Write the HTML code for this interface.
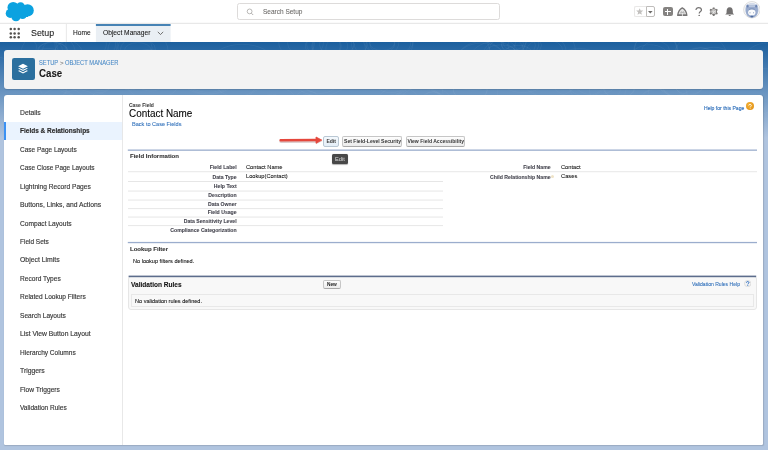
<!DOCTYPE html>
<html><head><meta charset="utf-8"><style>
*{box-sizing:border-box}
html,body{margin:0;padding:0;width:768px;height:450px;overflow:hidden;background:#fff;font-family:"Liberation Sans",sans-serif}
#root{position:relative;width:768px;height:450px;overflow:hidden;will-change:transform}
.t{position:absolute;white-space:nowrap;line-height:1}
.abs{position:absolute}
.btn{position:absolute;border:1px solid #c6c6c6;border-bottom-color:#a9a9a9;border-radius:2px;background:linear-gradient(#fdfdfd,#ececec)}
</style></head><body><div id="root">
<div class="abs" style="left:0;top:0;width:768px;height:23px;background:#fff"></div>
<svg class="abs" style="left:0;top:0" width="40" height="23" viewBox="0 0 40 23"><g fill="#0ba2e0">
<circle cx="13.2" cy="7.6" r="5.7"/><circle cx="20.6" cy="6.9" r="4.6"/><circle cx="27.6" cy="10.4" r="6.2"/>
<circle cx="10.2" cy="13.4" r="4.5"/><circle cx="16" cy="16.6" r="4.7"/><circle cx="22.6" cy="14.6" r="4.4"/>
<rect x="10" y="8" width="18" height="9"/></g></svg>
<div class="abs" style="left:236.5px;top:3.4px;width:263.5px;height:16.2px;border:1px solid #dddbda;border-radius:2.5px;background:#fff"></div>
<svg class="abs" style="left:246px;top:8px" width="8" height="8" viewBox="0 0 8 8"><circle cx="3.6" cy="3.4" r="2.4" fill="none" stroke="#a3a19f" stroke-width="0.75"/><path d="M5.4 5.2 L7.2 7.0" stroke="#a3a19f" stroke-width="0.85"/></svg>
<div class="t" style="left:263.00px;top:8.05px;font-size:7.0px;font-weight:normal;color:#6b6967;transform:scaleX(0.9289);transform-origin:left top;-webkit-text-stroke:0.08px currentColor;">Search Setup</div>
<div class="abs" style="left:634.4px;top:5.5px;width:12px;height:11.8px;border:1px solid #e9e8e7;border-right:0;border-radius:2px 0 0 2px"></div>
<div class="abs" style="left:646px;top:5.5px;width:9px;height:11.8px;border:1px solid #bfbdbb;border-radius:0 2px 2px 0"></div>
<svg class="abs" style="left:636.4px;top:8.4px" width="7.4" height="7" viewBox="0 0 10 9.5"><path d="M5 0.2 L6.3 3.3 L9.8 3.5 L7.1 5.7 L8 9.2 L5 7.3 L2 9.2 L2.9 5.7 L0.2 3.5 L3.7 3.3Z" fill="#c2c0be"/></svg>
<svg class="abs" style="left:648.3px;top:10.6px" width="4.6" height="3" viewBox="0 0 4.6 3"><path d="M0 0 H4.6 L2.3 2.6Z" fill="#6b6967"/></svg>
<div class="abs" style="left:663px;top:6.8px;width:9.8px;height:9.6px;background:#858381;border-radius:2px"></div>
<div class="abs" style="left:665.0px;top:11.1px;width:5.8px;height:1.1px;background:#fff"></div>
<div class="abs" style="left:667.35px;top:8.75px;width:1.1px;height:5.8px;background:#fff"></div>
<svg class="abs" style="left:677.2px;top:6.5px" width="10.6" height="9.6" viewBox="0 0 10.6 9.6">
<path d="M5.3 0.9 A8.9 8.9 0 0 1 9.75 8.6 A8.9 8.9 0 0 1 0.85 8.6 A8.9 8.9 0 0 1 5.3 0.9Z" fill="#e8e8e8" stroke="#767474" stroke-width="1.25" stroke-linejoin="round"/>
<path d="M2.6 6.6 L4.3 4.0 L5.4 5.1 L6.5 3.9 L8.1 6.6Z" fill="#b8b8b8"/>
<path d="M0.4 7.2 L10.2 7.2 L10.1 9.2 L0.5 9.2Z" fill="#767474"/><rect x="4.95" y="6.2" width="0.7" height="3.2" fill="#fff"/></svg>
<svg class="abs" style="left:694.6px;top:6.8px" width="7.6" height="9.6" viewBox="0 0 7.6 9.6"><path d="M1 2.9 C1 1.4 2.2 0.7 3.7 0.7 C5.3 0.7 6.5 1.6 6.5 2.9 C6.5 4.4 4.2 4.6 4.2 6.4" stroke="#767474" stroke-width="1.25" fill="none"/><circle cx="4.2" cy="8.6" r="0.8" fill="#767474"/></svg>
<svg class="abs" style="left:709.4px;top:7.4px" width="9.4" height="9.4" viewBox="0 0 10 10"><path d="M6.77 1.93 L5.92 1.57 L5.98 0.40 L4.02 0.40 L4.08 1.57 L3.22 1.93 L2.49 2.49 L1.51 1.86 L0.53 3.55 L1.57 4.08 L1.45 5.00 L1.57 5.92 L0.53 6.45 L1.51 8.14 L2.49 7.51 L3.22 8.07 L4.08 8.43 L4.02 9.60 L5.98 9.60 L5.92 8.43 L6.77 8.07 L7.51 7.51 L8.49 8.14 L9.47 6.45 L8.43 5.92 L8.55 5.00 L8.43 4.08 L9.47 3.55 L8.49 1.86 L7.51 2.49Z" fill="#7a7876"/>
<circle cx="5" cy="5" r="2.55" fill="#fafafa"/><circle cx="5" cy="5" r="1.7" fill="none" stroke="#7a7876" stroke-width="0.55"/><path d="M5 3.9 L5 5.1 L5.8 5.5" stroke="#8a8886" stroke-width="0.4" fill="none"/></svg>
<svg class="abs" style="left:725px;top:6.9px" width="9.4" height="9.2" viewBox="0 0 10 9.8"><path d="M5 0.2 C7.5 0.2 8.3 2.3 8.3 4.4 L8.4 6.6 L9.8 8 L0.2 8 L1.6 6.6 L1.7 4.4 C1.7 2.3 2.5 0.2 5 0.2Z" fill="#727070"/><path d="M3.8 8.4 A1.2 1.2 0 0 0 6.2 8.4Z" fill="#727070"/></svg>
<svg class="abs" style="left:742.5px;top:1px" width="17.8" height="17.6" viewBox="0 0 17.8 17.6">
<circle cx="8.9" cy="8.75" r="8.2" fill="#fdfdfd" stroke="#cdcdcd" stroke-width="0.7"/>
<circle cx="8.9" cy="8.75" r="7.1" fill="#d3dbe9"/>
<path d="M3.4 5.6 C3.2 4.2 3.6 3.4 4.6 3.6 L6 4.2 L11.8 4.2 L13.2 3.6 C14.2 3.4 14.6 4.2 14.4 5.6 C15.4 8 15.2 13 13.2 15 C11.6 16.2 10.2 16.6 8.9 16.6 C7.6 16.6 6.2 16.2 4.6 15 C2.6 13 2.4 8 3.4 5.6Z" fill="#99abcd"/>
<path d="M6 4.2 L11.8 4.2 L12.4 6 L5.4 6Z" fill="#b9c6de"/>
<ellipse cx="4.6" cy="5.2" rx="0.9" ry="1.2" fill="#6a82b0"/><ellipse cx="13.2" cy="5.2" rx="0.9" ry="1.2" fill="#6a82b0"/>
<ellipse cx="8.9" cy="8.4" rx="3" ry="1.2" fill="#7d93bb"/>
<ellipse cx="8.8" cy="11.4" rx="3.7" ry="2.9" fill="#fbfcfd"/>
<circle cx="7" cy="11.7" r="0.55" fill="#7d90b4"/><circle cx="10.6" cy="11.7" r="0.55" fill="#7d90b4"/>
<ellipse cx="8.9" cy="15.6" rx="1.6" ry="0.9" fill="#4f6b9e"/></svg>
<svg class="abs" style="left:0px;top:22px" width="769" height="3"><rect x="0.00" y="0.80" width="768.00" height="1.10" fill="#e6e6e6" fill-opacity="1"/></svg>
<svg class="abs" style="left:8px;top:26px" width="14" height="14" viewBox="0 0 14 14"><g fill="#53514f"><circle cx="2.8" cy="3.1" r="1.25"/><circle cx="6.6" cy="3.1" r="1.25"/><circle cx="10.7" cy="3.1" r="1.25"/><circle cx="2.8" cy="7.5" r="1.25"/><circle cx="6.6" cy="7.5" r="1.25"/><circle cx="10.7" cy="7.5" r="1.25"/><circle cx="2.8" cy="11.3" r="1.25"/><circle cx="6.6" cy="11.3" r="1.25"/><circle cx="10.7" cy="11.3" r="1.25"/></g></svg>
<div class="t" style="left:31.40px;top:28.31px;font-size:9.4px;font-weight:normal;color:#181818;transform:scaleX(0.9444);transform-origin:left top;-webkit-text-stroke:0.08px currentColor;">Setup</div>
<svg class="abs" style="left:65px;top:24px" width="3" height="19"><rect x="0.90" y="0.00" width="0.80" height="18.00" fill="#e3e3e3" fill-opacity="1"/></svg>
<div class="t" style="left:72.50px;top:29.45px;font-size:7.0px;font-weight:normal;color:#181818;transform:scaleX(0.9426);transform-origin:left top;-webkit-text-stroke:0.08px currentColor;">Home</div>
<svg class="abs" style="left:95px;top:24px" width="77" height="19"><rect x="0.90" y="0.00" width="74.70" height="18.00" fill="#eaeff4" fill-opacity="1"/></svg>
<svg class="abs" style="left:95px;top:24px" width="77" height="3"><rect x="0.90" y="0.10" width="74.70" height="1.80" fill="#3677ae" fill-opacity="1"/></svg>
<div class="t" style="left:102.70px;top:29.45px;font-size:7.0px;font-weight:normal;color:#181818;transform:scaleX(0.9517);transform-origin:left top;-webkit-text-stroke:0.08px currentColor;">Object Manager</div>
<svg class="abs" style="left:156.6px;top:31.1px" width="7" height="5" viewBox="0 0 7 5"><path d="M0.8 0.9 L3.5 3.5 L6.2 0.9" stroke="#514f4d" stroke-width="0.8" fill="none"/></svg>
<div class="abs" style="left:0;top:42px;width:768px;height:408px;background:#b0c4df"></div>
<div class="abs" style="left:0;top:42px;width:768px;height:96px;background:linear-gradient(#1b5f9e,rgba(176,196,223,0))"></div>
<svg class="abs" style="left:0;top:42px" width="768" height="130" viewBox="0 0 768 130"><defs><linearGradient id="fadeg" x1="0" y1="0" x2="0" y2="1"><stop offset="0" stop-color="#fff" stop-opacity="1"/><stop offset="1" stop-color="#fff" stop-opacity="0"/></linearGradient><mask id="fadem"><rect width="768" height="130" fill="url(#fadeg)"/></mask></defs><g mask="url(#fadem)" fill="none" stroke="#ffffff" stroke-opacity="0.09" stroke-width="0.6"><ellipse cx="242.3" cy="21.1" rx="7.1" ry="5.9"/><ellipse cx="242.3" cy="21.1" rx="11.1" ry="8.1"/><ellipse cx="242.3" cy="21.1" rx="32.0" ry="18.8"/><ellipse cx="49.6" cy="58.5" rx="8.0" ry="5.4"/><ellipse cx="649.8" cy="17.3" rx="19.9" ry="14.6"/><ellipse cx="30.1" cy="82.0" rx="27.5" ry="14.3"/><ellipse cx="675.4" cy="40.5" rx="17.9" ry="13.0"/><ellipse cx="433.8" cy="95.5" rx="18.8" ry="14.2"/><ellipse cx="281.6" cy="76.7" rx="18.4" ry="13.8"/><ellipse cx="382.1" cy="74.4" rx="16.2" ry="14.1"/><ellipse cx="382.1" cy="74.4" rx="17.0" ry="10.2"/><ellipse cx="125.6" cy="109.2" rx="18.6" ry="13.2"/><ellipse cx="688.9" cy="102.1" rx="19.4" ry="10.3"/><ellipse cx="688.9" cy="102.1" rx="20.3" ry="11.5"/><ellipse cx="257.1" cy="130.7" rx="6.9" ry="5.3"/><ellipse cx="257.1" cy="130.7" rx="25.8" ry="18.8"/><ellipse cx="689.1" cy="43.9" rx="13.7" ry="9.6"/><ellipse cx="689.1" cy="43.9" rx="26.5" ry="14.0"/><ellipse cx="689.1" cy="43.9" rx="14.1" ry="8.5"/><ellipse cx="544.6" cy="9.1" rx="21.4" ry="16.3"/><ellipse cx="544.6" cy="9.1" rx="30.8" ry="25.6"/><ellipse cx="544.6" cy="9.1" rx="18.3" ry="11.9"/><ellipse cx="521.6" cy="3.2" rx="13.8" ry="10.3"/><ellipse cx="521.6" cy="3.2" rx="19.9" ry="11.7"/><ellipse cx="212.8" cy="103.4" rx="14.6" ry="12.4"/><ellipse cx="212.8" cy="103.4" rx="10.8" ry="7.3"/><ellipse cx="425.0" cy="123.7" rx="25.0" ry="15.3"/><ellipse cx="425.0" cy="123.7" rx="18.1" ry="11.7"/><ellipse cx="696.2" cy="134.1" rx="7.8" ry="4.4"/><ellipse cx="513.4" cy="1.7" rx="10.0" ry="6.1"/><ellipse cx="513.4" cy="1.7" rx="12.2" ry="8.7"/><ellipse cx="513.4" cy="1.7" rx="25.4" ry="15.9"/><ellipse cx="81.6" cy="120.3" rx="20.4" ry="16.2"/><ellipse cx="81.6" cy="120.3" rx="19.0" ry="16.2"/><ellipse cx="81.6" cy="120.3" rx="32.9" ry="25.4"/><ellipse cx="433.0" cy="55.7" rx="8.3" ry="6.2"/><ellipse cx="433.0" cy="55.7" rx="10.4" ry="5.5"/><ellipse cx="149.1" cy="22.7" rx="19.2" ry="10.4"/><ellipse cx="149.1" cy="22.7" rx="21.5" ry="15.3"/><ellipse cx="748.6" cy="85.9" rx="25.2" ry="18.8"/><ellipse cx="100.3" cy="35.3" rx="19.3" ry="13.3"/><ellipse cx="100.3" cy="35.3" rx="11.5" ry="8.0"/><ellipse cx="772.0" cy="67.3" rx="7.9" ry="4.3"/><ellipse cx="772.0" cy="67.3" rx="16.5" ry="10.0"/><ellipse cx="651.4" cy="22.6" rx="10.5" ry="9.3"/><ellipse cx="273.0" cy="96.6" rx="22.7" ry="14.0"/><ellipse cx="500.8" cy="12.7" rx="17.4" ry="15.0"/><ellipse cx="500.8" cy="12.7" rx="16.8" ry="9.9"/><ellipse cx="418.7" cy="70.4" rx="10.9" ry="9.0"/><ellipse cx="418.7" cy="70.4" rx="30.7" ry="25.8"/><ellipse cx="418.7" cy="70.4" rx="29.7" ry="24.6"/><ellipse cx="579.3" cy="31.7" rx="16.8" ry="13.3"/><ellipse cx="579.3" cy="31.7" rx="30.8" ry="25.1"/><ellipse cx="579.3" cy="31.7" rx="22.4" ry="12.9"/><ellipse cx="470.2" cy="48.2" rx="27.7" ry="24.5"/><ellipse cx="470.2" cy="48.2" rx="17.0" ry="10.0"/><ellipse cx="470.2" cy="48.2" rx="17.0" ry="9.8"/><ellipse cx="145.5" cy="87.4" rx="24.5" ry="16.9"/><ellipse cx="145.5" cy="87.4" rx="23.4" ry="19.2"/><ellipse cx="145.5" cy="87.4" rx="13.9" ry="10.6"/><ellipse cx="716.9" cy="109.5" rx="16.5" ry="9.4"/><ellipse cx="619.2" cy="46.6" rx="14.7" ry="9.7"/><ellipse cx="619.2" cy="46.6" rx="29.8" ry="23.6"/><ellipse cx="619.2" cy="46.6" rx="15.7" ry="8.7"/><ellipse cx="102.4" cy="126.7" rx="9.2" ry="7.7"/><ellipse cx="102.4" cy="126.7" rx="30.6" ry="23.3"/><ellipse cx="102.4" cy="126.7" rx="19.7" ry="14.2"/><ellipse cx="86.1" cy="2.0" rx="20.3" ry="14.4"/><ellipse cx="86.1" cy="2.0" rx="29.5" ry="19.9"/><ellipse cx="86.1" cy="2.0" rx="31.2" ry="25.9"/><ellipse cx="150.9" cy="35.3" rx="17.0" ry="13.7"/><ellipse cx="150.9" cy="35.3" rx="16.2" ry="11.6"/><ellipse cx="655.7" cy="8.5" rx="13.8" ry="9.4"/><ellipse cx="655.7" cy="8.5" rx="21.8" ry="18.8"/><ellipse cx="655.7" cy="8.5" rx="21.3" ry="18.4"/><ellipse cx="386.3" cy="74.5" rx="17.2" ry="14.6"/><ellipse cx="386.3" cy="74.5" rx="26.1" ry="19.4"/><ellipse cx="386.3" cy="74.5" rx="29.1" ry="16.3"/><ellipse cx="94.7" cy="86.7" rx="18.2" ry="11.5"/><ellipse cx="399.9" cy="77.8" rx="25.4" ry="13.3"/><ellipse cx="135.0" cy="5.9" rx="17.2" ry="12.4"/><ellipse cx="595.6" cy="127.7" rx="13.2" ry="11.7"/><ellipse cx="595.6" cy="127.7" rx="22.3" ry="12.9"/><ellipse cx="204.5" cy="71.1" rx="17.2" ry="10.3"/><ellipse cx="204.5" cy="71.1" rx="20.5" ry="17.4"/><ellipse cx="731.5" cy="129.2" rx="24.5" ry="13.6"/><ellipse cx="78.5" cy="61.9" rx="20.8" ry="13.9"/><ellipse cx="152.3" cy="42.4" rx="25.7" ry="14.5"/><ellipse cx="560.1" cy="92.4" rx="11.6" ry="6.4"/><ellipse cx="358.9" cy="104.5" rx="14.8" ry="10.3"/><ellipse cx="781.8" cy="116.5" rx="21.5" ry="19.3"/><ellipse cx="307.1" cy="59.0" rx="13.0" ry="10.3"/><ellipse cx="307.1" cy="59.0" rx="9.4" ry="6.8"/><ellipse cx="336.8" cy="2.5" rx="17.4" ry="10.7"/><ellipse cx="336.8" cy="2.5" rx="30.1" ry="16.4"/><ellipse cx="724.0" cy="32.0" rx="7.8" ry="4.8"/><ellipse cx="713.8" cy="25.4" rx="24.0" ry="20.2"/><ellipse cx="527.5" cy="132.4" rx="9.3" ry="8.1"/><ellipse cx="527.5" cy="132.4" rx="21.6" ry="16.8"/><ellipse cx="52.5" cy="8.1" rx="10.0" ry="8.6"/><ellipse cx="52.5" cy="8.1" rx="14.9" ry="7.6"/><ellipse cx="52.5" cy="8.1" rx="13.9" ry="8.4"/><ellipse cx="472.6" cy="31.1" rx="25.0" ry="17.0"/><ellipse cx="472.6" cy="31.1" rx="16.5" ry="11.9"/><ellipse cx="730.6" cy="37.5" rx="7.0" ry="5.4"/><ellipse cx="739.9" cy="135.7" rx="7.1" ry="4.1"/><ellipse cx="739.9" cy="135.7" rx="15.9" ry="9.9"/><ellipse cx="595.2" cy="40.6" rx="20.8" ry="12.6"/><ellipse cx="595.2" cy="40.6" rx="26.7" ry="24.0"/><ellipse cx="595.2" cy="40.6" rx="12.8" ry="6.5"/><ellipse cx="389.6" cy="136.9" rx="16.4" ry="14.4"/><ellipse cx="389.6" cy="136.9" rx="11.3" ry="9.4"/><ellipse cx="389.6" cy="136.9" rx="21.5" ry="15.0"/><ellipse cx="656.0" cy="55.0" rx="12.8" ry="7.5"/><ellipse cx="656.0" cy="55.0" rx="14.1" ry="8.1"/><ellipse cx="656.0" cy="55.0" rx="31.4" ry="24.9"/><ellipse cx="93.2" cy="138.5" rx="24.4" ry="12.3"/><ellipse cx="486.6" cy="123.2" rx="9.6" ry="5.1"/><ellipse cx="486.6" cy="123.2" rx="27.5" ry="23.3"/><ellipse cx="523.1" cy="39.5" rx="21.2" ry="11.0"/><ellipse cx="130.1" cy="37.7" rx="11.8" ry="10.4"/><ellipse cx="767.8" cy="76.6" rx="6.8" ry="5.8"/><ellipse cx="156.5" cy="25.6" rx="14.4" ry="9.9"/><ellipse cx="156.5" cy="25.6" rx="20.1" ry="11.6"/><ellipse cx="388.8" cy="0.7" rx="24.0" ry="13.4"/><ellipse cx="388.8" cy="0.7" rx="21.9" ry="14.4"/><ellipse cx="222.7" cy="88.2" rx="18.9" ry="13.4"/><ellipse cx="587.9" cy="92.1" rx="23.2" ry="17.2"/><ellipse cx="587.9" cy="92.1" rx="25.8" ry="20.3"/><ellipse cx="587.9" cy="92.1" rx="22.9" ry="14.0"/><ellipse cx="481.2" cy="20.3" rx="25.6" ry="19.2"/><ellipse cx="481.2" cy="20.3" rx="25.1" ry="20.7"/><ellipse cx="481.2" cy="20.3" rx="15.1" ry="10.7"/><ellipse cx="388.5" cy="116.9" rx="24.2" ry="17.7"/><ellipse cx="703.2" cy="95.6" rx="20.1" ry="10.8"/><ellipse cx="703.2" cy="95.6" rx="9.9" ry="7.5"/><ellipse cx="703.2" cy="95.6" rx="33.1" ry="21.5"/><ellipse cx="345.6" cy="7.1" rx="19.8" ry="15.3"/><ellipse cx="376.3" cy="0.5" rx="22.5" ry="15.7"/><ellipse cx="413.5" cy="92.3" rx="22.4" ry="15.4"/><ellipse cx="635.5" cy="118.5" rx="22.0" ry="12.8"/><ellipse cx="579.3" cy="136.6" rx="24.6" ry="13.1"/><ellipse cx="579.3" cy="136.6" rx="29.0" ry="17.9"/><ellipse cx="17.9" cy="88.6" rx="7.7" ry="4.3"/><ellipse cx="185.7" cy="104.1" rx="19.7" ry="10.9"/><ellipse cx="185.7" cy="104.1" rx="19.6" ry="13.6"/><ellipse cx="767.7" cy="13.9" rx="20.9" ry="12.9"/><ellipse cx="398.4" cy="65.1" rx="22.9" ry="20.5"/><ellipse cx="398.4" cy="65.1" rx="21.1" ry="13.2"/><ellipse cx="49.5" cy="66.2" rx="16.1" ry="13.3"/><ellipse cx="49.5" cy="66.2" rx="30.3" ry="20.6"/><ellipse cx="197.6" cy="29.4" rx="7.6" ry="4.1"/><ellipse cx="585.5" cy="36.7" rx="8.9" ry="7.4"/><ellipse cx="585.5" cy="36.7" rx="20.2" ry="17.3"/><ellipse cx="549.7" cy="32.4" rx="14.7" ry="8.3"/><ellipse cx="549.7" cy="32.4" rx="29.9" ry="23.1"/><ellipse cx="308.4" cy="101.8" rx="13.6" ry="8.5"/><ellipse cx="308.4" cy="101.8" rx="27.5" ry="13.8"/><ellipse cx="588.1" cy="117.5" rx="26.7" ry="15.4"/><ellipse cx="-10.5" cy="103.6" rx="14.2" ry="9.3"/><ellipse cx="-10.5" cy="103.6" rx="31.0" ry="22.8"/><ellipse cx="272.2" cy="59.9" rx="24.8" ry="15.2"/><ellipse cx="272.2" cy="59.9" rx="10.1" ry="7.8"/><ellipse cx="494.3" cy="20.8" rx="15.6" ry="9.8"/><ellipse cx="494.3" cy="20.8" rx="26.0" ry="21.2"/><ellipse cx="326.5" cy="4.1" rx="14.8" ry="12.6"/><ellipse cx="326.5" cy="4.1" rx="21.2" ry="12.3"/><ellipse cx="326.5" cy="4.1" rx="13.8" ry="12.0"/><ellipse cx="312.8" cy="86.1" rx="20.2" ry="12.4"/><ellipse cx="19.7" cy="129.7" rx="9.8" ry="6.5"/><ellipse cx="208.2" cy="35.8" rx="27.5" ry="16.6"/><ellipse cx="208.2" cy="35.8" rx="23.4" ry="14.5"/><ellipse cx="208.2" cy="35.8" rx="24.3" ry="16.0"/><ellipse cx="115.5" cy="22.6" rx="17.0" ry="14.0"/><ellipse cx="425.8" cy="63.4" rx="27.9" ry="19.0"/><ellipse cx="425.8" cy="63.4" rx="12.1" ry="7.0"/><ellipse cx="53.5" cy="47.9" rx="13.0" ry="8.4"/><ellipse cx="635.6" cy="28.3" rx="22.5" ry="15.0"/><ellipse cx="315.2" cy="73.4" rx="11.9" ry="9.6"/><ellipse cx="315.2" cy="73.4" rx="20.0" ry="14.6"/><ellipse cx="271.7" cy="96.1" rx="19.9" ry="16.8"/><ellipse cx="271.7" cy="96.1" rx="13.8" ry="8.4"/><ellipse cx="271.7" cy="96.1" rx="17.5" ry="11.5"/><ellipse cx="341.1" cy="133.6" rx="8.8" ry="5.9"/><ellipse cx="598.6" cy="112.6" rx="16.8" ry="8.9"/><ellipse cx="598.6" cy="112.6" rx="29.5" ry="25.7"/><ellipse cx="598.6" cy="112.6" rx="23.6" ry="16.2"/><ellipse cx="343.6" cy="109.6" rx="9.4" ry="6.7"/><ellipse cx="532.5" cy="131.8" rx="21.4" ry="18.0"/><ellipse cx="532.5" cy="131.8" rx="28.7" ry="15.3"/><ellipse cx="532.5" cy="131.8" rx="29.1" ry="14.6"/><ellipse cx="81.8" cy="79.7" rx="20.2" ry="12.6"/><ellipse cx="83.7" cy="35.3" rx="15.6" ry="12.6"/><ellipse cx="83.7" cy="35.3" rx="11.2" ry="6.9"/><ellipse cx="83.7" cy="35.3" rx="32.8" ry="18.9"/><ellipse cx="191.3" cy="110.7" rx="6.2" ry="3.9"/><ellipse cx="353.2" cy="134.3" rx="24.5" ry="14.6"/><ellipse cx="353.2" cy="134.3" rx="20.6" ry="14.8"/><ellipse cx="353.2" cy="134.3" rx="12.6" ry="8.4"/><ellipse cx="506.2" cy="7.7" rx="17.0" ry="13.1"/><ellipse cx="320.2" cy="36.0" rx="15.3" ry="9.9"/><ellipse cx="320.2" cy="36.0" rx="19.8" ry="15.4"/><ellipse cx="320.2" cy="36.0" rx="27.8" ry="17.9"/><ellipse cx="301.1" cy="0.9" rx="22.3" ry="15.6"/><ellipse cx="301.1" cy="0.9" rx="13.5" ry="12.0"/><ellipse cx="232.5" cy="114.8" rx="16.2" ry="9.8"/><ellipse cx="700.4" cy="15.3" rx="16.9" ry="9.7"/><ellipse cx="700.4" cy="15.3" rx="13.9" ry="9.3"/><ellipse cx="700.4" cy="15.3" rx="26.6" ry="23.4"/><ellipse cx="98.6" cy="55.1" rx="6.5" ry="4.8"/><ellipse cx="316.5" cy="99.4" rx="14.7" ry="12.6"/><ellipse cx="695.7" cy="102.6" rx="26.5" ry="16.7"/><ellipse cx="130.3" cy="131.0" rx="16.3" ry="10.2"/><ellipse cx="130.3" cy="131.0" rx="25.0" ry="20.9"/><ellipse cx="130.3" cy="131.0" rx="33.7" ry="22.8"/><ellipse cx="68.3" cy="11.0" rx="13.7" ry="12.1"/><ellipse cx="80.2" cy="135.0" rx="14.4" ry="11.6"/><ellipse cx="230.0" cy="112.6" rx="7.1" ry="4.9"/><ellipse cx="281.9" cy="128.7" rx="13.1" ry="10.4"/><ellipse cx="364.4" cy="88.4" rx="23.9" ry="19.2"/><ellipse cx="12.9" cy="4.9" rx="23.7" ry="12.4"/><ellipse cx="137.9" cy="8.8" rx="13.5" ry="8.2"/><ellipse cx="137.9" cy="8.8" rx="30.1" ry="22.5"/><ellipse cx="137.9" cy="8.8" rx="17.8" ry="14.0"/><ellipse cx="236.4" cy="38.6" rx="21.9" ry="16.1"/><ellipse cx="632.6" cy="132.5" rx="6.5" ry="3.9"/><ellipse cx="364.9" cy="133.9" rx="23.4" ry="20.2"/><ellipse cx="364.9" cy="133.9" rx="26.9" ry="14.9"/><ellipse cx="382.2" cy="1.2" rx="12.7" ry="9.8"/><ellipse cx="382.2" cy="1.2" rx="12.3" ry="7.3"/><ellipse cx="382.2" cy="1.2" rx="30.9" ry="21.2"/><ellipse cx="614.9" cy="83.4" rx="10.3" ry="8.3"/><ellipse cx="614.9" cy="83.4" rx="14.4" ry="7.6"/><ellipse cx="614.9" cy="83.4" rx="12.7" ry="9.2"/><ellipse cx="243.9" cy="137.2" rx="27.7" ry="16.8"/><ellipse cx="48.1" cy="13.5" rx="27.7" ry="24.7"/><ellipse cx="48.1" cy="13.5" rx="12.8" ry="7.1"/><ellipse cx="353.3" cy="124.8" rx="22.5" ry="18.8"/><ellipse cx="518.2" cy="17.0" rx="12.5" ry="9.1"/><ellipse cx="518.2" cy="17.0" rx="17.2" ry="13.7"/><ellipse cx="141.3" cy="34.6" rx="11.2" ry="6.8"/><ellipse cx="715.1" cy="26.4" rx="14.7" ry="13.2"/><ellipse cx="390.9" cy="32.4" rx="20.4" ry="18.3"/><ellipse cx="62.9" cy="66.5" rx="24.5" ry="21.2"/><ellipse cx="12.7" cy="41.1" rx="7.1" ry="5.3"/><ellipse cx="650.6" cy="27.2" rx="14.2" ry="12.0"/></g></svg>
<div class="abs" style="left:4px;top:49.5px;width:759px;height:39px;background:#f3f3f3;border-radius:3px;box-shadow:0 1px 1px rgba(0,0,0,.12)"></div>
<div class="abs" style="left:12px;top:57.7px;width:22.8px;height:22.8px;background:#2b6f9e;border-radius:2.2px"></div>
<svg class="abs" style="left:16.4px;top:62.2px" width="14" height="14" viewBox="0 0 13 13"><g fill="#fff"><path d="M6.5 1.6 L11 3.9 L6.5 6.2 L2 3.9Z"/><path d="M2.9 5.5 L6.5 7.3 L10.1 5.5 L11 6.1 L6.5 8.4 L2 6.1Z"/><path d="M2.9 7.7 L6.5 9.5 L10.1 7.7 L11 8.3 L6.5 10.6 L2 8.3Z"/></g></svg>
<div class="t" style="left:38.80px;top:59.79px;font-size:6.6px;font-weight:normal;color:#4a8ac6;transform:scaleX(0.8725);transform-origin:left top;-webkit-text-stroke:0.08px currentColor;">SETUP</div>
<div class="t" style="left:59.60px;top:60.13px;font-size:6.2px;font-weight:normal;color:#777;transform:scaleX(0.9941);transform-origin:left top;-webkit-text-stroke:0.08px currentColor;">&gt;</div>
<div class="t" style="left:64.90px;top:59.79px;font-size:6.6px;font-weight:normal;color:#4a8ac6;transform:scaleX(0.8769);transform-origin:left top;-webkit-text-stroke:0.08px currentColor;">OBJECT MANAGER</div>
<div class="t" style="left:38.90px;top:69.16px;font-size:10.4px;font-weight:bold;color:#181818;transform:scaleX(0.9331);transform-origin:left top;-webkit-text-stroke:0.08px currentColor;">Case</div>
<div class="abs" style="left:4px;top:95px;width:758.8px;height:350px;background:#fff;border-radius:3px 3px 1.5px 1.5px;box-shadow:0.5px 0.6px 1px rgba(0,0,0,.13)"></div>
<div class="abs" style="left:4px;top:122px;width:118.5px;height:17.5px;background:#eaf3fe"></div>
<div class="abs" style="left:4px;top:122px;width:2.2px;height:17.5px;background:#3b91f3"></div>
<svg class="abs" style="left:122px;top:95px" width="2" height="351"><rect x="0.10" y="0.00" width="0.90" height="350.00" fill="#e6e6e6" fill-opacity="1"/></svg>
<div class="t" style="left:20.00px;top:108.85px;font-size:7.0px;font-weight:normal;color:#363636;transform:scaleX(0.9646);transform-origin:left top;-webkit-text-stroke:0.15px currentColor;">Details</div>
<div class="t" style="left:20.00px;top:127.30px;font-size:7.0px;font-weight:bold;color:#2b2b2b;transform:scaleX(0.9287);transform-origin:left top;-webkit-text-stroke:0.15px currentColor;">Fields &amp; Relationships</div>
<div class="t" style="left:20.00px;top:145.75px;font-size:7.0px;font-weight:normal;color:#363636;transform:scaleX(0.9269);transform-origin:left top;-webkit-text-stroke:0.15px currentColor;">Case Page Layouts</div>
<div class="t" style="left:20.00px;top:164.20px;font-size:7.0px;font-weight:normal;color:#363636;transform:scaleX(0.9202);transform-origin:left top;-webkit-text-stroke:0.15px currentColor;">Case Close Page Layouts</div>
<div class="t" style="left:20.00px;top:182.65px;font-size:7.0px;font-weight:normal;color:#363636;transform:scaleX(0.9473);transform-origin:left top;-webkit-text-stroke:0.15px currentColor;">Lightning Record Pages</div>
<div class="t" style="left:20.00px;top:201.10px;font-size:7.0px;font-weight:normal;color:#363636;transform:scaleX(0.9643);transform-origin:left top;-webkit-text-stroke:0.15px currentColor;">Buttons, Links, and Actions</div>
<div class="t" style="left:20.00px;top:219.55px;font-size:7.0px;font-weight:normal;color:#363636;transform:scaleX(0.9463);transform-origin:left top;-webkit-text-stroke:0.15px currentColor;">Compact Layouts</div>
<div class="t" style="left:20.00px;top:238.00px;font-size:7.0px;font-weight:normal;color:#363636;transform:scaleX(0.9242);transform-origin:left top;-webkit-text-stroke:0.15px currentColor;">Field Sets</div>
<div class="t" style="left:20.00px;top:256.45px;font-size:7.0px;font-weight:normal;color:#363636;transform:scaleX(0.9804);transform-origin:left top;-webkit-text-stroke:0.15px currentColor;">Object Limits</div>
<div class="t" style="left:20.00px;top:274.90px;font-size:7.0px;font-weight:normal;color:#363636;transform:scaleX(0.9453);transform-origin:left top;-webkit-text-stroke:0.15px currentColor;">Record Types</div>
<div class="t" style="left:20.00px;top:293.35px;font-size:7.0px;font-weight:normal;color:#363636;transform:scaleX(0.9386);transform-origin:left top;-webkit-text-stroke:0.15px currentColor;">Related Lookup Filters</div>
<div class="t" style="left:20.00px;top:311.80px;font-size:7.0px;font-weight:normal;color:#363636;transform:scaleX(0.9416);transform-origin:left top;-webkit-text-stroke:0.15px currentColor;">Search Layouts</div>
<div class="t" style="left:20.00px;top:330.25px;font-size:7.0px;font-weight:normal;color:#363636;transform:scaleX(0.9666);transform-origin:left top;-webkit-text-stroke:0.15px currentColor;">List View Button Layout</div>
<div class="t" style="left:20.00px;top:348.70px;font-size:7.0px;font-weight:normal;color:#363636;transform:scaleX(0.9365);transform-origin:left top;-webkit-text-stroke:0.15px currentColor;">Hierarchy Columns</div>
<div class="t" style="left:20.00px;top:367.15px;font-size:7.0px;font-weight:normal;color:#363636;transform:scaleX(0.9743);transform-origin:left top;-webkit-text-stroke:0.15px currentColor;">Triggers</div>
<div class="t" style="left:20.00px;top:385.60px;font-size:7.0px;font-weight:normal;color:#363636;transform:scaleX(0.95);transform-origin:left top;-webkit-text-stroke:0.15px currentColor;">Flow Triggers</div>
<div class="t" style="left:20.00px;top:404.05px;font-size:7.0px;font-weight:normal;color:#363636;transform:scaleX(0.932);transform-origin:left top;-webkit-text-stroke:0.15px currentColor;">Validation Rules</div>
<div class="t" style="left:128.80px;top:103.17px;font-size:5.1px;font-weight:bold;color:#444;transform:scaleX(0.9761);transform-origin:left top;-webkit-text-stroke:0.08px currentColor;">Case Field</div>
<div class="t" style="left:128.80px;top:108.56px;font-size:10.4px;font-weight:normal;color:#000;transform:scaleX(0.9538);transform-origin:left top;-webkit-text-stroke:0.08px currentColor;">Contact Name</div>
<div class="t" style="left:131.80px;top:121.54px;font-size:5.6px;font-weight:normal;color:#2f6fba;transform:scaleX(0.9940);transform-origin:left top;-webkit-text-stroke:0.08px currentColor;">Back to Case Fields</div>
<div class="t" style="left:703.50px;top:105.62px;font-size:5.5px;font-weight:normal;color:#3171bb;transform:scaleX(0.9218);transform-origin:left top;-webkit-text-stroke:0.15px currentColor;">Help for this Page</div>
<div class="abs" style="left:746.2px;top:102.2px;width:7.9px;height:7.9px;border-radius:50%;background:radial-gradient(circle at 40% 35%,#f5b338,#dd8a10)"></div>
<svg class="abs" style="left:748.2px;top:103.5px" width="4" height="5.4" viewBox="0 0 4 5.4"><path d="M0.6 1.5 C0.6 0.8 1.2 0.4 2 0.4 C2.8 0.4 3.4 0.9 3.4 1.5 C3.4 2.3 2.2 2.4 2.2 3.4" stroke="#fff" stroke-width="0.8" fill="none"/><circle cx="2.2" cy="4.7" r="0.45" fill="#fff"/></svg>
<div class="btn" style="left:323px;top:136.4px;width:15.8px;height:10.3px;background:linear-gradient(#f4f9fd,#e4eef7);border-color:#b9c7d3"></div>
<div class="t" style="left:326.40px;top:139.31px;font-size:5.05px;font-weight:bold;color:#333;">Edit</div>
<div class="btn" style="left:342.3px;top:136.4px;width:60.1px;height:10.4px"></div>
<div class="t" style="left:344.10px;top:139.31px;font-size:5.05px;font-weight:bold;color:#333;">Set Field-Level Security</div>
<div class="btn" style="left:405.5px;top:136.4px;width:59.8px;height:10.4px"></div>
<div class="t" style="left:407.40px;top:139.31px;font-size:5.05px;font-weight:bold;color:#333;">View Field Accessibility</div>
<svg class="abs" style="left:274px;top:132px" width="52" height="16" viewBox="0 0 52 16">
<path d="M7 9.3 L42 9.0" stroke="rgba(90,20,20,.22)" stroke-width="3.4" stroke-linecap="round"/>
<path d="M42.2 5.8 L48.6 9.1 L42.2 12.3Z" fill="rgba(90,20,20,.18)"/>
<path d="M6.6 8.3 L42 8.0" stroke="#e5473c" stroke-width="2.4" stroke-linecap="round"/>
<path d="M42 5.0 L47.8 8.1 L42 11.3Z" fill="#e5473c" stroke="#e5473c" stroke-width="0.8" stroke-linejoin="round"/></svg>
<div class="abs" style="left:332.1px;top:153.8px;width:16.1px;height:9.8px;background:#484848;border-radius:1.5px;box-shadow:0 0.5px 1px rgba(0,0,0,.3)"></div>
<div class="t" style="left:335.20px;top:155.70px;font-size:6.0px;font-weight:normal;color:#dedede;transform:scaleX(0.9478);transform-origin:left top;">Edit</div>
<svg class="abs" style="left:127px;top:149px" width="631" height="3"><rect x="0.80" y="0.50" width="629.20" height="1.30" fill="#9badcd" fill-opacity="1"/></svg>
<div class="t" style="left:130.00px;top:153.30px;font-size:6.0px;font-weight:bold;color:#333;transform:scaleX(1.0069);transform-origin:left top;-webkit-text-stroke:0.08px currentColor;">Field Information</div>
<div class="t" style="right:531.40px;top:165.02px;font-size:5.15px;font-weight:bold;color:#45454f;-webkit-text-stroke:0.08px currentColor;">Field Label</div>
<svg class="abs" style="left:128px;top:171px" width="630" height="3"><rect x="0.00" y="0.30" width="629.00" height="0.90" fill="#e4e4e4" fill-opacity="1"/></svg>
<div class="t" style="right:531.40px;top:174.52px;font-size:5.15px;font-weight:bold;color:#45454f;-webkit-text-stroke:0.08px currentColor;">Data Type</div>
<svg class="abs" style="left:128px;top:181px" width="316" height="2"><rect x="0.00" y="0.00" width="315.00" height="0.90" fill="#e4e4e4" fill-opacity="1"/></svg>
<div class="t" style="right:531.40px;top:183.52px;font-size:5.15px;font-weight:bold;color:#45454f;-webkit-text-stroke:0.08px currentColor;">Help Text</div>
<svg class="abs" style="left:128px;top:190px" width="316" height="3"><rect x="0.00" y="0.60" width="315.00" height="0.90" fill="#e4e4e4" fill-opacity="1"/></svg>
<div class="t" style="right:531.40px;top:192.52px;font-size:5.15px;font-weight:bold;color:#45454f;-webkit-text-stroke:0.08px currentColor;">Description</div>
<svg class="abs" style="left:128px;top:199px" width="316" height="3"><rect x="0.00" y="0.60" width="315.00" height="0.90" fill="#e4e4e4" fill-opacity="1"/></svg>
<div class="t" style="right:531.40px;top:201.52px;font-size:5.15px;font-weight:bold;color:#45454f;-webkit-text-stroke:0.08px currentColor;">Data Owner</div>
<svg class="abs" style="left:128px;top:208px" width="316" height="3"><rect x="0.00" y="0.20" width="315.00" height="0.90" fill="#e4e4e4" fill-opacity="1"/></svg>
<div class="t" style="right:531.40px;top:210.22px;font-size:5.15px;font-weight:bold;color:#45454f;-webkit-text-stroke:0.08px currentColor;">Field Usage</div>
<svg class="abs" style="left:128px;top:216px" width="316" height="3"><rect x="0.00" y="0.60" width="315.00" height="0.90" fill="#e4e4e4" fill-opacity="1"/></svg>
<div class="t" style="right:531.40px;top:219.12px;font-size:5.15px;font-weight:bold;color:#45454f;-webkit-text-stroke:0.08px currentColor;">Data Sensitivity Level</div>
<svg class="abs" style="left:128px;top:225px" width="316" height="3"><rect x="0.00" y="0.20" width="315.00" height="0.90" fill="#e4e4e4" fill-opacity="1"/></svg>
<div class="t" style="right:531.40px;top:227.92px;font-size:5.15px;font-weight:bold;color:#45454f;-webkit-text-stroke:0.08px currentColor;">Compliance Categorization</div>
<div class="t" style="left:245.90px;top:164.00px;font-size:6.0px;font-weight:normal;color:#111;transform:scaleX(0.9518);transform-origin:left top;-webkit-text-stroke:0.08px currentColor;">Contact Name</div>
<div class="t" style="left:245.90px;top:173.40px;font-size:6.0px;font-weight:normal;color:#111;transform:scaleX(0.9401);transform-origin:left top;-webkit-text-stroke:0.08px currentColor;">Lookup(Contact)</div>
<div class="t" style="right:217.40px;top:165.02px;font-size:5.15px;font-weight:bold;color:#45454f;-webkit-text-stroke:0.08px currentColor;">Field Name</div>
<div class="t" style="right:217.40px;top:174.52px;font-size:5.15px;font-weight:bold;color:#45454f;-webkit-text-stroke:0.08px currentColor;">Child Relationship Name</div>
<div class="abs" style="left:551.2px;top:175.2px;width:3.2px;height:3.2px;border-radius:50%;background:#efe3c6"></div>
<div class="t" style="left:560.70px;top:164.00px;font-size:6.0px;font-weight:normal;color:#111;transform:scaleX(0.9478);transform-origin:left top;-webkit-text-stroke:0.08px currentColor;">Contact</div>
<div class="t" style="left:560.70px;top:173.40px;font-size:6.0px;font-weight:normal;color:#111;transform:scaleX(0.9584);transform-origin:left top;-webkit-text-stroke:0.08px currentColor;">Cases</div>
<svg class="abs" style="left:127px;top:241px" width="631" height="4"><rect x="0.80" y="0.90" width="629.20" height="1.30" fill="#9badcd" fill-opacity="1"/></svg>
<div class="t" style="left:130.00px;top:245.70px;font-size:6.0px;font-weight:bold;color:#333;transform:scaleX(1.0000);transform-origin:left top;-webkit-text-stroke:0.08px currentColor;">Lookup Filter</div>
<div class="t" style="left:132.90px;top:258.64px;font-size:5.6px;font-weight:normal;color:#111;transform:scaleX(0.9946);transform-origin:left top;-webkit-text-stroke:0.08px currentColor;">No lookup filters defined.</div>
<div class="abs" style="left:127.8px;top:275.9px;width:629.2px;height:33.7px;background:#f8f8f8;border:1px solid #e6e6e6;border-radius:3px"></div>
<svg class="abs" style="left:128px;top:275px" width="630" height="4"><rect x="0.60" y="0.60" width="627.60" height="1.60" fill="#5d6d8c" fill-opacity="1"/></svg>
<div class="t" style="left:131.10px;top:281.69px;font-size:6.6px;font-weight:bold;color:#111;transform:scaleX(0.9945);transform-origin:left top;-webkit-text-stroke:0.08px currentColor;">Validation Rules</div>
<div class="btn" style="left:323.4px;top:280.1px;width:17.3px;height:8.7px"></div>
<div class="t" style="left:327.20px;top:282.05px;font-size:5.0px;font-weight:bold;color:#222;transform:scaleX(0.9532);transform-origin:left top;">New</div>
<div class="t" style="left:692.00px;top:282.17px;font-size:5.1px;font-weight:normal;color:#2f6fba;transform:scaleX(0.9921);transform-origin:left top;-webkit-text-stroke:0.08px currentColor;">Validation Rules Help</div>
<svg class="abs" style="left:743.6px;top:279.8px" width="7.4" height="7.2" viewBox="0 0 7.2 7"><circle cx="3.6" cy="3.5" r="3.1" fill="#f4f4f4" stroke="#cfcfcf" stroke-width="0.6"/><path d="M2.4 2.6 C2.4 1.9 2.9 1.5 3.6 1.5 C4.3 1.5 4.8 2 4.8 2.6 C4.8 3.4 3.7 3.4 3.7 4.3" stroke="#2a6cc0" stroke-width="0.95" fill="none"/><circle cx="3.7" cy="5.3" r="0.5" fill="#2a6cc0"/></svg>
<div class="abs" style="left:131px;top:294.4px;width:622.8px;height:12.3px;background:#f8f8f8;border:0.8px solid #e8e8e8"></div>
<div class="t" style="left:134.70px;top:298.64px;font-size:5.6px;font-weight:normal;color:#111;transform:scaleX(0.9918);transform-origin:left top;-webkit-text-stroke:0.08px currentColor;">No validation rules defined.</div>
</div></body></html>
